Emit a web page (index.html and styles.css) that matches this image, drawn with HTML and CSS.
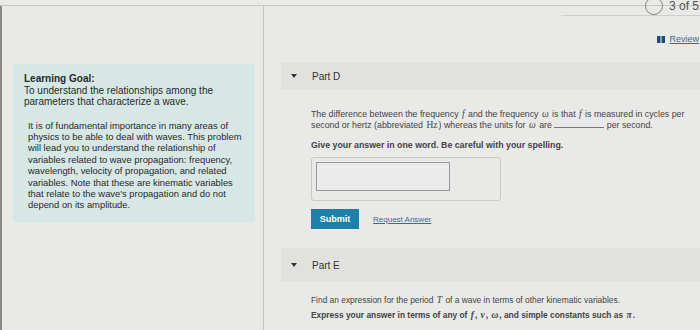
FILE: index.html
```html
<!DOCTYPE html>
<html lang="en">
<head>
    <meta charset="UTF-8">
    <title>Part D</title>
    <link rel="stylesheet" href="styles.css">
</head>
<body>
    <div class="page">
        <div class="left">
            <div class="goal">
                <p class="goal-title"><b>Learning Goal:</b><br>To understand the relationships among the parameters that characterize a wave.</p>
                <p class="goal-text">It is of fundamental importance in many areas of physics to be able to deal with waves. This problem will lead you to understand the relationship of variables related to wave propagation: frequency, wavelength, velocity of propagation, and related variables. Note that these are kinematic variables that relate to the wave's propagation and do not depend on its amplitude.</p>
            </div>
        </div>
        <div class="right">
            <div class="topbar">
                <span class="pager"><span class="circle"></span>3 of 5</span>
            </div>
            <div class="review-row">
                <a class="review"><svg width="8" height="7" viewBox="0 0 8 7"><rect x="0" y="0" width="3.5" height="7" fill="#1b4f7a"/><rect x="4.5" y="0" width="3.5" height="7" fill="#1b4f7a"/></svg>Review</a>
            </div>
            <div class="part-head"><span class="tri"></span>Part D</div>
            <div class="part-body">
                <p class="q">
                    <span class="line">The difference between the frequency <i class="m">f</i> and the frequency <i class="m">ω</i> is that <i class="m">f</i> is measured in cycles per</span>
                    <span class="line">second or hertz (abbreviated <span class="m">Hz</span>) whereas the units for <i class="m">ω</i> are <span class="blank"></span> per second.</span>
                </p>
                <p class="instr">Give your answer in one word. Be careful with your spelling.</p>
                <div class="answer-box"><div class="answer-input"></div></div>
                <div class="actions">
                    <button class="submit">Submit</button>
                    <a class="req">Request Answer</a>
                </div>
            </div>
            <div class="part-head part-e"><span class="tri"></span>Part E</div>
            <div class="part-body">
                <p class="q">Find an expression for the period <i class="m">T</i> of a wave in terms of other kinematic variables.</p>
                <p class="instr">Express your answer in terms of any of <i class="m">f</i>, <i class="m">v</i>, <i class="m">ω</i>, and simple constants such as <i class="m">π</i>.</p>
            </div>
        </div>
    </div>
</body>
</html>
```

FILE: styles.css
```css
body { margin: 0; background: #e9e9e7; font-family: "Liberation Sans", Arial, sans-serif; color: #2a2a2a; overflow: hidden; }
p { margin: 0; }
.page { display: grid; grid-template-columns: 264px minmax(0, 1fr); height: 330px; border-top: 1px solid #c9c9c7; margin-top: 5px; }
.left { border-left: 2px solid #8a8a88; border-right: 1px solid #c4c4c2; padding: 58px 8px 0 11px; }
.goal { background: #d6e7e5; padding: 9px 6px 14px 11px; height: 135px; }
.goal-title { font-size: 10px; line-height: 11.5px; margin-bottom: 12px; }
.goal-text { font-size: 9.4px; line-height: 11.4px; padding-left: 4px; }
.right { padding-left: 17px; position: relative; }
.topbar { height: 9px; border-bottom: 1px solid #cfcfcd; margin-left: 280px; position: relative; }
.pager { position: absolute; left: 84px; top: -9px; font-size: 12px; color: #555; display: flex; align-items: center; gap: 6px; }
.circle { width: 16px; height: 16px; border: 1px solid #888; border-radius: 50%; }
.review-row { display: flex; justify-content: flex-end; padding-top: 17px; height: 12px; margin-right: 1px; }
.review { font-size: 9px; color: #3a6b9a; text-decoration: underline; display: flex; align-items: center; gap: 4px; }
.part-head { background: #e1e1df; margin-top: 17px; height: 28px; display: flex; align-items: center; font-size: 10px; padding-left: 10px; color: #333; }
.tri { width: 0; height: 0; border-left: 3px solid transparent; border-right: 3px solid transparent; border-top: 4px solid #333; margin-right: 15px; }
.part-body { padding-left: 30px; padding-top: 19px; }
.q { font-size: 8.8px; line-height: 11px; color: #444; width: 380px; }
.line { display: block; white-space: nowrap; }
.m { font-family: "Liberation Serif", serif; font-size: 9.5px; line-height: 1; padding: 0 1px; }
.blank { display: inline-block; width: 50px; border-bottom: 1px solid #777; }
.instr { font-size: 8.8px; font-weight: bold; color: #444; margin-top: 9px; }
.answer-box { width: 180px; height: 34px; border: 1px solid #c9c9c7; border-radius: 3px; margin-top: 7px; padding: 4px; }
.answer-input { width: 132px; height: 27px; border: 1px solid #999; background: #eaeaea; }
.actions { display: flex; align-items: center; gap: 14px; margin-top: 8px; }
.submit { background: #1e7fa8; color: #fff; border: none; font-family: inherit; font-size: 9px; font-weight: bold; width: 48px; height: 20px; padding: 0; }
.req { font-size: 8px; color: #3a6b9a; text-decoration: underline; }
.part-e { margin-top: 19px; height: 34px; }
.part-e + .part-body { padding-top: 13px; }
.part-e + .part-body .q { font-size: 8.4px; width: 390px; }
.part-e + .part-body .instr { margin-top: 4px; font-size: 8.4px; }
```
